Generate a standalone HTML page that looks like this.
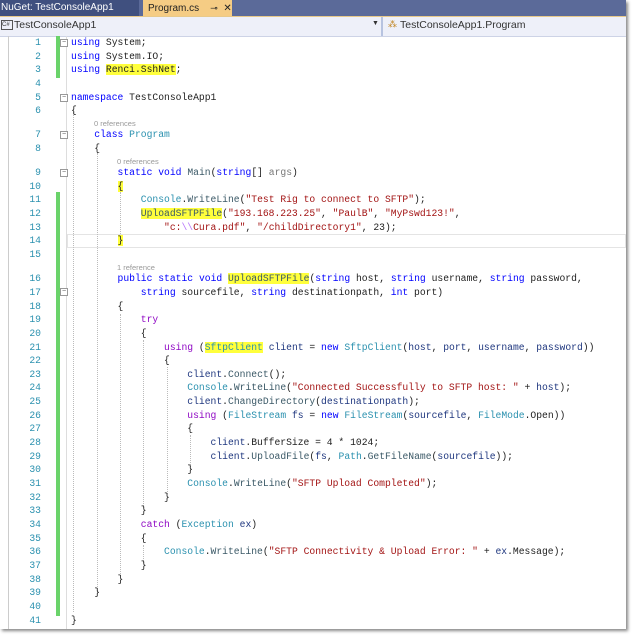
<!DOCTYPE html>
<html><head><meta charset="utf-8"><style>
body{margin:0;width:637px;height:640px;background:#fff;position:relative;overflow:hidden;font-family:"Liberation Sans",sans-serif}
#frame{position:absolute;left:0;top:0;width:626px;height:629px;background:#fff;box-shadow:2px 2px 3px #888;overflow:hidden}
#tabs{position:absolute;left:0;top:0;width:626px;height:16px;background:#5b6a99}
.tab{position:absolute;top:0;height:16px;font-size:10px;line-height:16px;color:#fff;white-space:nowrap;overflow:hidden}
#nav{position:absolute;left:0;top:16px;width:626px;height:19px;background:#eef0f9;border-top:1px solid #e8c98a;border-bottom:1px solid #cdd3e6;font-size:10.5px;color:#333}
.ln{position:absolute;left:8px;width:33px;text-align:right;font-family:"Liberation Mono",monospace;font-size:9.7px;color:#2b91af;height:14px;line-height:14px}
.cd{position:absolute;left:71px;font-family:"Liberation Mono",monospace;font-size:9.7px;white-space:pre;color:#1e1e1e;height:14px;line-height:14px}
.lens{position:absolute;font-size:7.5px;color:#999;font-family:"Liberation Sans",sans-serif}
.k{color:#0000ff}.t{color:#2b91af}.s{color:#a31515}.c{color:#8f08c4}.m{color:#3a5866}.v{color:#1f377f}.e{color:#b776fb}
.hl{background:#ffff3c}
.g{position:absolute;border-left:1px dotted #bbb;width:0}
.fold{position:absolute;left:60px;width:6px;height:6px;border:1px solid #999;background:#fff;font-size:7px;line-height:5px;text-align:center;color:#555}
</style></head><body>
<div id="frame">
<div id="tabs">
 <div class="tab" style="left:0;width:138px;background:#40507f;padding-left:1px">NuGet: TestConsoleApp1</div>
 <div class="tab" style="left:143px;width:89px;background:#f5cc84;color:#222;padding-left:5px;box-sizing:border-box">Program.cs&nbsp;&nbsp;&nbsp;&nbsp;<span style="font-size:9px">⊸</span>&nbsp;&nbsp;✕</div>
</div>
<div id="nav">
 <div style="position:absolute;left:1px;top:3px;width:10px;height:8px;border:1px solid #555;font-size:6px;line-height:8px">C#</div>
 <div style="position:absolute;left:14px;top:2px">TestConsoleApp1</div>
 <div style="position:absolute;left:372px;top:3px;font-size:7px">▼</div>
 <div style="position:absolute;left:381px;top:0;width:2px;height:19px;background:#b7c3e0"></div>
 <div style="position:absolute;left:388px;top:2px;color:#c48a2a;font-size:9px">⁂</div>
 <div style="position:absolute;left:400px;top:2px">TestConsoleApp1.Program</div>
</div>
<div style="position:absolute;left:8px;top:36px;width:1px;height:593px;background:#ccc"></div>
<div style="position:absolute;left:56px;top:36px;width:4px;height:42px;background:#6ad36a"></div>
<div style="position:absolute;left:56px;top:192px;width:4px;height:424px;background:#6ad36a"></div>
<div style="position:absolute;left:66px;top:36px;width:1px;height:593px;background:#ddd"></div>
<div style="position:absolute;left:67px;top:234px;width:559px;height:14px;border:1px solid #e4e4e4;box-sizing:border-box"></div>
<div class="g" style="left:73px;top:112px;height:500px"></div>
<div class="g" style="left:97px;top:153px;height:438px"></div>
<div class="g" style="left:120px;top:192px;height:42px"></div>
<div class="g" style="left:120px;top:314px;height:262px"></div>
<div class="g" style="left:143px;top:340px;height:168px"></div>
<div class="g" style="left:143px;top:545px;height:18px"></div>
<div class="g" style="left:167px;top:367px;height:127px"></div>
<div class="g" style="left:190px;top:435px;height:32px"></div>
<div class="fold" style="top:39px">−</div>
<div class="fold" style="top:94px">−</div>
<div class="fold" style="top:131px">−</div>
<div class="fold" style="top:169px">−</div>
<div class="fold" style="top:288px">−</div>

<div class="ln" style="top:36px">1</div><div class="cd" style="top:36px"><span class="k">using</span> System;</div>
<div class="ln" style="top:49.6px">2</div><div class="cd" style="top:49.6px"><span class="k">using</span> System.IO;</div>
<div class="ln" style="top:63.3px">3</div><div class="cd" style="top:63.3px"><span class="k">using</span> <span class="hl">Renci.SshNet</span>;</div>
<div class="ln" style="top:77px">4</div>
<div class="ln" style="top:90.6px">5</div><div class="cd" style="top:90.6px"><span class="k">namespace</span> TestConsoleApp1</div>
<div class="ln" style="top:104.3px">6</div><div class="cd" style="top:104.3px">{</div>
<div class="lens" style="left:94px;top:119px">0 references</div>
<div class="ln" style="top:128.4px">7</div><div class="cd" style="top:128.4px">    <span class="k">class</span> <span class="t">Program</span></div>
<div class="ln" style="top:142px">8</div><div class="cd" style="top:142px">    {</div>
<div class="lens" style="left:117px;top:157px">0 references</div>
<div class="ln" style="top:166px">9</div><div class="cd" style="top:166px">        <span class="k">static</span> <span class="k">void</span> <span class="m">Main</span>(<span class="k">string</span>[] <span style="color:#777">args</span>)</div>
<div class="ln" style="top:179.6px">10</div><div class="cd" style="top:179.6px">        <span class="hl">{</span></div>
<div class="ln" style="top:193.3px">11</div><div class="cd" style="top:193.3px">            <span class="t">Console</span>.<span class="m">WriteLine</span>(<span class="s">"Test Rig to connect to SFTP"</span>);</div>
<div class="ln" style="top:207px">12</div><div class="cd" style="top:207px">            <span class="hl m">UploadSFTPFile</span>(<span class="s">"193.168.223.25"</span>, <span class="s">"PaulB"</span>, <span class="s">"MyPswd123!"</span>,</div>
<div class="ln" style="top:220.6px">13</div><div class="cd" style="top:220.6px">                <span class="s">"c:</span><span style="color:#b776fb">\\</span><span class="s">Cura.pdf"</span>, <span class="s">"/childDirectory1"</span>, 23);</div>
<div class="ln" style="top:234.3px">14</div><div class="cd" style="top:234.3px">        <span class="hl">}</span></div>
<div class="ln" style="top:248px">15</div>
<div class="lens" style="left:117px;top:263px">1 reference</div>
<div class="ln" style="top:272.2px">16</div><div class="cd" style="top:272.2px">        <span class="k">public</span> <span class="k">static</span> <span class="k">void</span> <span class="hl m">UploadSFTPFile</span>(<span class="k">string</span> host, <span class="k">string</span> username, <span class="k">string</span> password,</div>
<div class="ln" style="top:285.9px">17</div><div class="cd" style="top:285.9px">            <span class="k">string</span> sourcefile, <span class="k">string</span> destinationpath, <span class="k">int</span> port)</div>
<div class="ln" style="top:299.5px">18</div><div class="cd" style="top:299.5px">        {</div>
<div class="ln" style="top:313.2px">19</div><div class="cd" style="top:313.2px">            <span class="c">try</span></div>
<div class="ln" style="top:326.8px">20</div><div class="cd" style="top:326.8px">            {</div>
<div class="ln" style="top:340.5px">21</div><div class="cd" style="top:340.5px">                <span class="c">using</span> (<span class="hl t">SftpClient</span> <span class="v">client</span> = <span class="k">new</span> <span class="t">SftpClient</span>(<span class="v">host</span>, <span class="v">port</span>, <span class="v">username</span>, <span class="v">password</span>))</div>
<div class="ln" style="top:354.1px">22</div><div class="cd" style="top:354.1px">                {</div>
<div class="ln" style="top:367.8px">23</div><div class="cd" style="top:367.8px">                    <span class="v">client</span>.<span class="m">Connect</span>();</div>
<div class="ln" style="top:381.4px">24</div><div class="cd" style="top:381.4px">                    <span class="t">Console</span>.<span class="m">WriteLine</span>(<span class="s">"Connected Successfully to SFTP host: "</span> + <span class="v">host</span>);</div>
<div class="ln" style="top:395.1px">25</div><div class="cd" style="top:395.1px">                    <span class="v">client</span>.<span class="m">ChangeDirectory</span>(<span class="v">destinationpath</span>);</div>
<div class="ln" style="top:408.7px">26</div><div class="cd" style="top:408.7px">                    <span class="c">using</span> (<span class="t">FileStream</span> <span class="v">fs</span> = <span class="k">new</span> <span class="t">FileStream</span>(<span class="v">sourcefile</span>, <span class="t">FileMode</span>.Open))</div>
<div class="ln" style="top:422.4px">27</div><div class="cd" style="top:422.4px">                    {</div>
<div class="ln" style="top:436px">28</div><div class="cd" style="top:436px">                        <span class="v">client</span>.BufferSize = 4 * 1024;</div>
<div class="ln" style="top:449.7px">29</div><div class="cd" style="top:449.7px">                        <span class="v">client</span>.<span class="m">UploadFile</span>(<span class="v">fs</span>, <span class="t">Path</span>.<span class="m">GetFileName</span>(<span class="v">sourcefile</span>));</div>
<div class="ln" style="top:463.3px">30</div><div class="cd" style="top:463.3px">                    }</div>
<div class="ln" style="top:477px">31</div><div class="cd" style="top:477px">                    <span class="t">Console</span>.<span class="m">WriteLine</span>(<span class="s">"SFTP Upload Completed"</span>);</div>
<div class="ln" style="top:490.6px">32</div><div class="cd" style="top:490.6px">                }</div>
<div class="ln" style="top:504.3px">33</div><div class="cd" style="top:504.3px">            }</div>
<div class="ln" style="top:517.9px">34</div><div class="cd" style="top:517.9px">            <span class="c">catch</span> (<span class="t">Exception</span> <span class="v">ex</span>)</div>
<div class="ln" style="top:531.6px">35</div><div class="cd" style="top:531.6px">            {</div>
<div class="ln" style="top:545.2px">36</div><div class="cd" style="top:545.2px">                <span class="t">Console</span>.<span class="m">WriteLine</span>(<span class="s">"SFTP Connectivity &amp; Upload Error: "</span> + <span class="v">ex</span>.Message);</div>
<div class="ln" style="top:558.9px">37</div><div class="cd" style="top:558.9px">            }</div>
<div class="ln" style="top:572.5px">38</div><div class="cd" style="top:572.5px">        }</div>
<div class="ln" style="top:586.2px">39</div><div class="cd" style="top:586.2px">    }</div>
<div class="ln" style="top:599.8px">40</div>
<div class="ln" style="top:613.5px">41</div><div class="cd" style="top:613.5px">}</div>
</div>
</body></html>
